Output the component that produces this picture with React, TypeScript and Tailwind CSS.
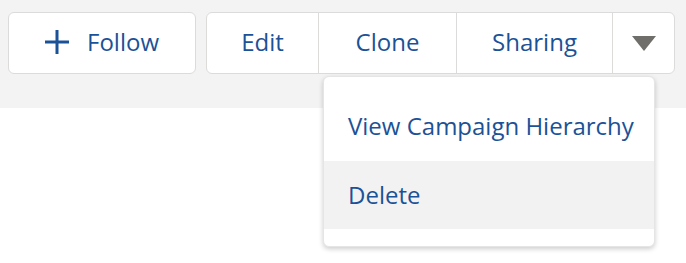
export default function App() {
  const segments = [
    { label: "Edit", width: "w-[112px]" },
    { label: "Clone", width: "w-[138px]" },
    { label: "Sharing", width: "w-[156px]" },
  ];

  return (
    <div className="relative w-[686px] h-[263px] bg-white font-['Open_Sans',sans-serif] text-[24px] leading-none text-[#1b5297]">
      {/* Header bar */}
      <div className="h-[108px] bg-[#f3f3f3] pt-3 pl-2 flex items-start gap-[10px]">
        <button className="w-[188px] h-[62px] pb-[2px] flex items-center justify-center gap-[18px] bg-white border border-[#dddbda] rounded-[6px]">
          <svg width="24" height="24" viewBox="0 0 24 24" className="shrink-0">
            <path d="M12 0v24M0 12h24" stroke="#1b5297" strokeWidth="3" fill="none" />
          </svg>
          <span>Follow</span>
        </button>

        <div className="flex h-[62px] bg-white border border-[#dddbda] rounded-[6px]">
          {segments.map((s) => (
            <button
              key={s.label}
              className={`${s.width} h-full pb-[2px] flex items-center justify-center border-r border-[#dddbda]`}
            >
              {s.label}
            </button>
          ))}
          <button className="w-[61px] h-full flex items-center justify-center">
            <svg width="24" height="15" viewBox="0 0 24 15">
              <path d="M0 0h24L12 15z" fill="#706e6b" />
            </svg>
          </button>
        </div>
      </div>

      {/* Dropdown menu */}
      <div className="absolute left-[323px] top-[76px] w-[332px] py-[17px] bg-white rounded-[6px] border border-[#e5e5e5] shadow-[0_2px_5px_rgba(0,0,0,0.2)]">
        <div className="h-[67px] pb-[3px] flex items-center pl-6">View Campaign Hierarchy</div>
        <div className="h-[68px] flex items-center pl-6 bg-[#f3f2f2]">Delete</div>
      </div>
    </div>
  );
}
